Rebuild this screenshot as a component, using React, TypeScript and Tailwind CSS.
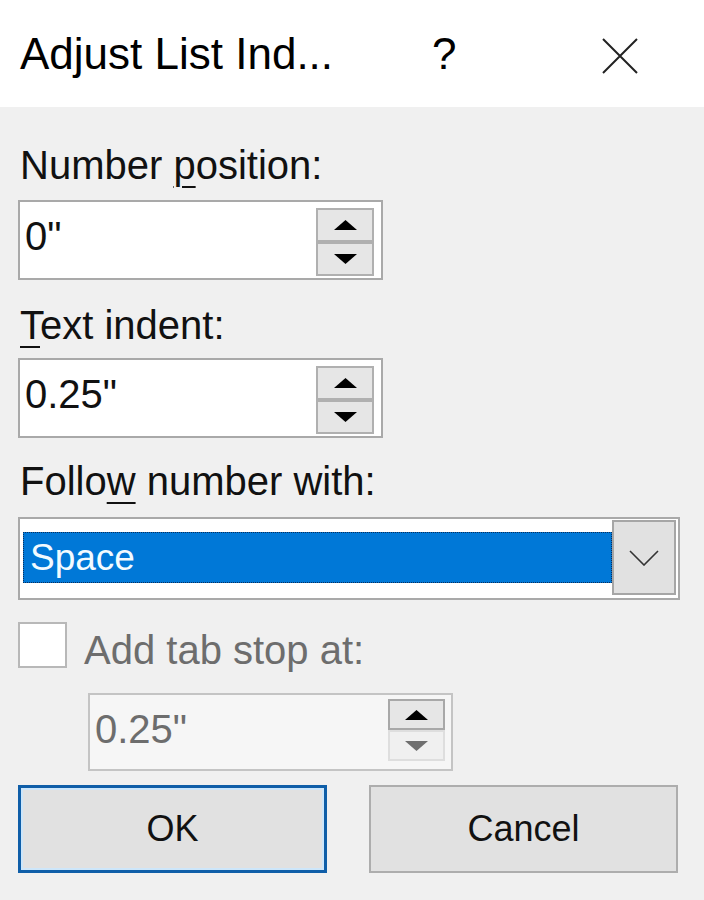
import React from "react";

function Tri({ dir, color = "#000" }: { dir: "up" | "down"; color?: string }) {
  return (
    <svg width="23" height="10" viewBox="0 0 23 10">
      {dir === "up" ? <polygon points="11.5,0 23,10 0,10" fill={color} /> : <polygon points="0,0 23,0 11.5,10" fill={color} />}
    </svg>
  );
}

function Spin({ value, disabled = false, className = "" }: { value: string; disabled?: boolean; className?: string }) {
  return (
    <div
      className={`flex w-[365px] border-2 ${disabled ? "h-[78px] border-[#c4c4c4] bg-[#f6f6f6]" : "h-[80px] border-[#a9a9a9] bg-white"} ${className}`}
    >
      <div className={`flex-1 pl-[5px] mt-[14px] text-[40px] leading-[40px] ${disabled ? "text-[#6d6d6d]" : "text-[#111]"}`}>{value}</div>
      {disabled ? (
        <div className="w-[57px] mt-[4px] mr-[6px] flex flex-col">
          <div className="h-[31px] border-2 border-[#a8a8a8] bg-[#e6e6e6] flex items-center justify-center">
            <Tri dir="up" />
          </div>
          <div className="h-[31px] border-2 border-[#dedede] bg-[#f0f0f0] flex items-center justify-center">
            <Tri dir="down" color="#6f6f6f" />
          </div>
        </div>
      ) : (
        <div className="w-[58px] mt-[6px] mr-[7px] flex flex-col">
          <div className="h-[34px] border-2 border-[#b0b0b0] bg-[#e6e6e6] flex items-center justify-center">
            <Tri dir="up" />
          </div>
          <div className="h-[34px] border-2 border-[#b0b0b0] bg-[#e6e6e6] flex items-center justify-center">
            <Tri dir="down" />
          </div>
        </div>
      )}
    </div>
  );
}

export default function App() {
  return (
    <div className="w-[704px] h-[900px] overflow-hidden bg-[#f0f0f0] text-[#111] font-['Liberation_Sans',Arial,sans-serif]">
      {/* title bar */}
      <div className="h-[107px] bg-white flex items-center">
        <span className="w-[432px] pl-[20px] text-[44px] leading-[44px] text-black">Adjust List Ind...</span>
        <span className="w-[24px] text-[44px] leading-[44px] text-black">?</span>
        <svg className="ml-[146px] mt-[4px]" width="36" height="36" viewBox="0 0 36 36">
          <path d="M1 1 L35 35 M35 1 L1 35" stroke="#222" strokeWidth="2" fill="none" />
        </svg>
      </div>

      <div className="px-[18px]">
        <div className="mt-[38px] pl-[2px] text-[40px] leading-[40px]">
          Number <span className="underline decoration-2 underline-offset-[7px]">p</span>osition:
        </div>
        <Spin value={'0"'} className="mt-[15px]" />

        <div className="mt-[25px] pl-[2px] text-[40px] leading-[40px]">
          <span className="underline decoration-2 underline-offset-[7px]">T</span>ext indent:
        </div>
        <Spin value={'0.25"'} className="mt-[13px]" />

        <div className="mt-[23px] pl-[2px] text-[40px] leading-[40px]">
          Follo<span className="underline decoration-2 underline-offset-[7px]">w</span> number with:
        </div>

        {/* combo box */}
        <div className="mt-[16px] w-[662px] h-[83px] border-2 border-[#a9a9a9] bg-white flex items-start">
          <div className="ml-[3px] mt-[13px] h-[51px] flex-1 bg-[#0078d7] border border-dotted border-[#0d2f5a] pl-[6px] pt-[6px] text-[37px] leading-[37px] text-[#f2fbff]">
            Space
          </div>
          <div className="w-[64px] h-[75px] mt-[1px] mr-[2px] border-2 border-[#a6a6a6] bg-[#e1e1e1] flex items-center justify-center">
            <svg width="30" height="16" viewBox="0 0 30 16">
              <polyline points="1,1 15,15 29,1" stroke="#333" strokeWidth="1.6" fill="none" />
            </svg>
          </div>
        </div>

        {/* checkbox */}
        <div className="mt-[22px] h-[46px] flex items-start">
          <div className="w-[49px] h-[46px] border-2 border-[#b8b8b8] bg-white" />
          <div className="ml-[17px] mt-[8px] text-[40px] leading-[40px] text-[#6d6d6d]">Add tab stop at:</div>
        </div>

        <Spin value={'0.25"'} disabled className="mt-[25px] ml-[70px]" />

        {/* buttons */}
        <div className="mt-[14px] flex gap-[42px]">
          <button className="w-[309px] h-[88px] border-[3px] border-[#0f5ea8] bg-[#e1e1e1] shadow-[inset_0_0_0_2px_#cde6fa] text-[36px] leading-[36px] text-[#111]">
            OK
          </button>
          <button className="w-[309px] h-[88px] border-2 border-[#adadad] bg-[#e1e1e1] text-[36px] leading-[36px] text-[#111]">
            Cancel
          </button>
        </div>
      </div>
    </div>
  );
}
